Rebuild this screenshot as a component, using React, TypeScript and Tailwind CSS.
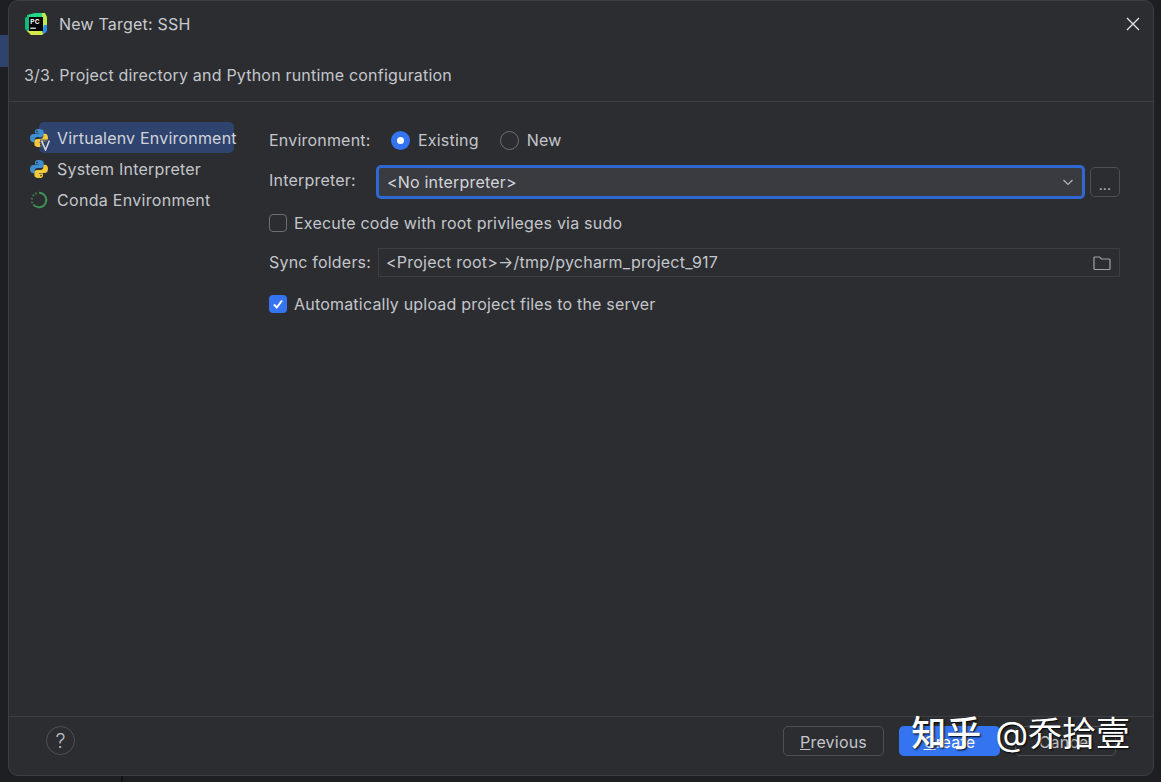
import React from "react";

function PyIcon({ className }: { className?: string }) {
  return (
    <svg viewBox="0 0 20 20" className={className}>
      <path d="M9.8 1C6.6 1 6 2.3 6 3.6V5.4h4.2v.7H4.2C2.5 6.100 1 7.300 1 10.100s1.300 4.100 3 4.100h1.600v-2.200c0-1.700 1.400-3 3.100-3h3.400c1.400 0 2.500-1.100 2.500-2.500V3.600C14.600 2.100 13.200 1 9.800 1z" fill="#3d8fd1" />
      <circle cx="8" cy="3.400" r="0.800" fill="#2b2d30" />
      <path d="M10.200 19c3.200 0 3.800-1.300 3.800-2.600v-1.800H9.800v-.7h6c1.700 0 3.200-1.200 3.200-4s-1.300-4.100-3-4.100h-1.600V8c0 1.700-1.400 3-3.100 3H7.900c-1.400 0-2.500 1.100-2.500 2.500v2.900c0 1.500 1.400 2.600 4.800 2.600z" fill="#f2c83c" />
      <circle cx="12" cy="16.600" r="0.800" fill="#2b2d30" />
    </svg>
  );
}

function VenvIcon() {
  return (
    <div className="relative h-[20px] w-[20px] shrink-0">
      <PyIcon className="h-[20px] w-[20px]" />
      <svg viewBox="0 0 10 10" className="absolute bottom-[-3px] right-[-2px] h-[12px] w-[11px]">
        <path d="M0 0h10v10H0z" fill="#2e436e" opacity="0.700" />
        <path d="M1.500 1 5 9.500 8.500 1" fill="none" stroke="#d6d8dd" strokeWidth="1.400" />
      </svg>
    </div>
  );
}

function CondaIcon() {
  return (
    <svg viewBox="0 0 20 20" className="h-[20px] w-[20px] shrink-0">
      <path d="M10 2.700a7.300 7.300 0 1 1-5.600 12" fill="none" stroke="#3f8f56" strokeWidth="2" />
      <path d="M3 13.200 3.300 11.600M2.700 9.500 3 7.900M3.900 6 4.900 4.700M6.200 3.800 7.700 3" fill="none" stroke="#3a7a4d" strokeWidth="2" />
    </svg>
  );
}

function PcLogo() {
  return (
    <svg viewBox="0 0 24 24" className="h-[24px] w-[24px] shrink-0">
      <path d="M3 3 11 1h8l3 4-1 9H3z" fill="#21d789" />
      <path d="M1 6 5 3v14l-1 3-3-3z" fill="#16b87a" />
      <path d="M3 19 8 17h10l3-3v6l-3 3H7z" fill="#d8e84a" />
      <path d="M18 1h3l2 4v10l-2 6-3-1z" fill="#b9e84d" />
      <path d="M20 13h3v6l-3 3-2-2z" fill="#2a8fe0" />
      <rect x="5" y="5" width="14" height="14" fill="#000" />
      <text x="6.300" y="11.800" fontSize="6.500" fontWeight="700" fill="#fff" fontFamily="Inter, sans-serif">PC</text>
      <rect x="6.300" y="15.600" width="5.500" height="1.200" fill="#fff" />
    </svg>
  );
}

export default function App() {
  return (
    <div className="relative flex h-[782px] w-full overflow-hidden bg-[#1e1f22] font-['Inter','Noto_Sans_CJK_SC',sans-serif] text-[16px] tracking-[0.2px] text-[#c4c6cc]">
      <div className="w-[8px] shrink-0 pt-[35px]">
        <div className="h-[32px] w-full bg-[#2e436e]" />
      </div>
      <div className="absolute bottom-0 left-[121px] h-[6px] w-[2px] bg-[#0f1012]" />
      <div className="relative mb-[6px] mr-[7px] flex min-w-0 flex-1 flex-col rounded-[10px] border border-[#3c3e43] bg-[#2b2d30]">
        <div className="flex h-[45px] shrink-0 items-center pl-[15px] pr-[12px]">
          <PcLogo />
          <span className="ml-[11px] flex-1 text-[#c9cbd1]">New Target: SSH</span>
          <svg viewBox="0 0 16 16" className="h-[16px] w-[16px] text-[#e6e7ea]" fill="none" stroke="currentColor" strokeWidth="1.300">
            <path d="M2 2l12 12M14 2L2 14" />
          </svg>
        </div>
        <div className="h-[56px] shrink-0 border-b border-[#3c3e43] pl-[15px] pt-[17px] text-[#c4c6cc]">
          3/3. Project directory and Python runtime configuration
        </div>
        <div className="flex min-h-0 flex-1">
          <div className="w-[260px] shrink-0 pt-[20px]">
            <div className="relative flex h-[31px] items-center gap-[8px] pl-[20px]">
              <div className="absolute bottom-0 left-[30px] top-0 w-[195px] rounded-[5px] bg-[#2e436e]" />
              <div className="relative flex items-center gap-[8px] whitespace-nowrap text-[#d2d4da]">
                <VenvIcon />
                <span>Virtualenv Environment</span>
              </div>
            </div>
            <div className="flex h-[31px] items-center gap-[8px] pl-[20px]">
              <PyIcon className="h-[20px] w-[20px] shrink-0" />
              <span>System Interpreter</span>
            </div>
            <div className="flex h-[31px] items-center gap-[8px] pl-[20px]">
              <CondaIcon />
              <span className="tracking-[0.3px]">Conda Environment</span>
            </div>
          </div>
          <div className="flex-1 pr-[33px] pt-[23px]">
            <div className="flex h-[30px] items-center">
              <span className="w-[122px]">Environment:</span>
              <span className="flex h-[19px] w-[19px] items-center justify-center rounded-full bg-[#3574f0]">
                <span className="h-[7px] w-[7px] rounded-full bg-white" />
              </span>
              <span className="ml-[8px]">Existing</span>
              <span className="ml-[21px] h-[19px] w-[19px] rounded-full border border-[#6c6e73]" />
              <span className="ml-[8px]">New</span>
            </div>
            <div className="mt-[10px] flex h-[34px] items-center">
              <span className="-mt-[5px] w-[107px] shrink-0">Interpreter:</span>
              <div className="flex h-[34px] flex-1 items-center justify-between rounded-[5px] border-[3px] border-[#3068d2] bg-[#393b40] pl-[8px] pr-[8px]">
                <span className="text-[#d2d4da]">&lt;No interpreter&gt;</span>
                <svg viewBox="0 0 12 12" className="h-[12px] w-[12px] text-[#b4b6bb]" fill="none" stroke="currentColor" strokeWidth="1.200">
                  <path d="M1.500 4l4.500 4.500L10.500 4" />
                </svg>
              </div>
              <div className="ml-[5px] flex h-[30px] w-[30px] shrink-0 items-center justify-center rounded-[5px] border border-[#4e5055] pt-[6px] text-[14px] leading-none">
                ...
              </div>
            </div>
            <div className="mt-[12px] flex h-[24px] items-center">
              <span className="h-[18px] w-[18px] rounded-[4px] border border-[#6c6e73]" />
              <span className="ml-[7px]">Execute code with root privileges via sudo</span>
            </div>
            <div className="mt-[13px] flex h-[29px] items-center">
              <span className="w-[109px] shrink-0 pb-[2px]">Sync folders:</span>
              <div className="flex h-[29px] flex-1 items-center justify-between border border-[#3c3e43] pl-[7px] pr-[8px]">
                <span className="pb-[2px] tracking-[0.22px]">&lt;Project root&gt;→/tmp/pycharm_project_917</span>
                <svg viewBox="0 0 18 16" className="h-[16px] w-[18px] text-[#a0a2a7]" fill="none" stroke="currentColor" strokeWidth="1.200">
                  <path d="M1 3a1 1 0 0 1 1-1h4.500l2 2H16a1 1 0 0 1 1 1v8.500a1 1 0 0 1-1 1H2a1 1 0 0 1-1-1z" />
                </svg>
              </div>
            </div>
            <div className="mt-[15px] flex h-[24px] items-center">
              <span className="flex h-[18px] w-[18px] items-center justify-center rounded-[4px] bg-[#3574f0]">
                <svg viewBox="0 0 14 14" className="h-[14px] w-[14px]" fill="none" stroke="#fff" strokeWidth="2">
                  <path d="M3 7.500l2.800 3L11 3.500" />
                </svg>
              </span>
              <span className="ml-[7px]">Automatically upload project files to the server</span>
            </div>
          </div>
        </div>
        <div className="flex h-[59px] shrink-0 items-start border-t border-[#3c3e43] pl-[37px] pr-[37px] pt-[9px]">
          <div className="flex h-[29px] w-[29px] items-center justify-center rounded-full border border-[#4e5055] text-[20px] font-light text-[#b8bac0]">?</div>
          <div className="flex-1" />
          <div className="flex h-[30px] w-[101px] items-center justify-center rounded-[5px] border border-[#4e5055] pt-[2px]">
            <span><span className="underline">P</span>revious</span>
          </div>
          <div className="ml-[15px] flex h-[30px] w-[101px] items-center justify-center rounded-[5px] bg-[#3574f0] pt-[2px] text-white">
            <span><span className="underline">C</span>reate</span>
          </div>
          <div className="ml-[15px] flex h-[30px] w-[101px] items-center justify-center rounded-[5px] border border-[#4e5055] pt-[2px]">
            Cancel
          </div>
        </div>
        <div className="absolute bottom-[24px] right-[23px] flex items-center whitespace-nowrap leading-none tracking-normal text-white [text-shadow:1px_1px_2px_#000]">
          <span className="text-[35px] font-medium">知乎</span>
          <span className="ml-[14px] text-[34px]">@乔拾壹</span>
        </div>
      </div>
    </div>
  );
}
